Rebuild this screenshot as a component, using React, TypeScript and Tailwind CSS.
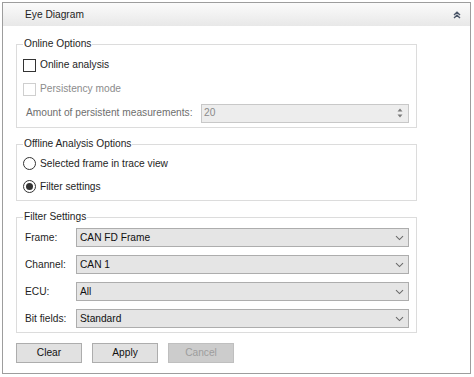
import type { ReactNode } from "react"

const font = { fontFamily: '"Liberation Sans", Arial, sans-serif' }

function Group({ title, children, className }: { title: string; children: ReactNode; className?: string }) {
  return (
    <fieldset className={`w-[401px] border border-[#dcdcdc] px-[6px] ${className ?? ""}`}>
      <legend className="px-[1px] leading-[14px] text-[#1e1e1e]">{title}</legend>
      {children}
    </fieldset>
  )
}

function Checkbox({ label, disabled }: { label: string; disabled?: boolean }) {
  return (
    <div className="flex h-[24px] items-center gap-[4px]">
      <span
        className={`h-[13px] w-[13px] border ${disabled ? "border-[#cfcfcf] bg-white" : "border-[#333333] bg-white"}`}
      />
      <span className={disabled ? "text-[#8c8c8c]" : "text-[#1e1e1e]"}>{label}</span>
    </div>
  )
}

function Radio({ label, checked }: { label: string; checked?: boolean }) {
  return (
    <div className="flex h-[23px] items-center gap-[4px]">
      <span className="flex h-[13px] w-[13px] items-center justify-center rounded-full border border-[#333333] bg-white">
        {checked && <span className="h-[7px] w-[7px] rounded-full bg-[#333333]" />}
      </span>
      <span className="text-[#1e1e1e]">{label}</span>
    </div>
  )
}

function Chevron() {
  return (
    <svg width="9" height="6" viewBox="0 0 9 6" className="text-[#6b6b6b]">
      <path d="M1 1.2 L4.5 4.6 L8 1.2" fill="none" stroke="currentColor" strokeWidth="1.1" />
    </svg>
  )
}

function Select({ label, value }: { label: string; value: string }) {
  return (
    <div className="flex h-[27px] items-center">
      <span className="w-[53px] pl-[2px] text-[#1e1e1e]">{label}</span>
      <div className="flex h-[19px] w-[333px] items-center justify-between border border-[#adadad] bg-[#e5e5e5] pl-[3px] pr-[4px]">
        <span className="text-[#111111]">{value}</span>
        <Chevron />
      </div>
    </div>
  )
}

function Button({ label, disabled }: { label: string; disabled?: boolean }) {
  return (
    <button
      disabled={disabled}
      className={`h-[20px] w-[66px] border text-center ${
        disabled ? "border-[#bfbfbf] bg-[#cccccc] text-[#9d9d9d]" : "border-[#adadad] bg-[#e1e1e1] text-[#111111]"
      }`}
    >
      {label}
    </button>
  )
}

export default function App() {
  return (
    <div className="h-[377px] w-[474px] bg-white pl-[2px] pt-[2px] text-[10.2px]" style={font}>
      <div className="h-[372px] w-[469px] border border-[#9d9d9d] bg-white">
        <div className="flex h-[23px] items-center justify-between bg-gradient-to-b from-[#fbfbfb] to-[#e8e8e8] pl-[22px] pr-[9px]">
          <span className="text-[#1e1e1e]">Eye Diagram</span>
          <svg width="8" height="8" viewBox="0 0 8 8" className="text-[#4a5568]">
            <path d="M1 4 L4 1.2 L7 4 M1 7 L4 4.2 L7 7" fill="none" stroke="currentColor" strokeWidth="1.4" />
          </svg>
        </div>

        <div className="flex flex-col pl-[13px]">
          <Group title="Online Options" className="mt-[11px] pb-[2px] pt-[2px]">
            <Checkbox label="Online analysis" />
            <Checkbox label="Persistency mode" disabled />
            <div className="flex h-[24px] items-center">
              <span className="w-[178px] pl-[3px] text-[#6e6e6e]">Amount of persistent measurements:</span>
              <div className="flex h-[19px] w-[208px] items-center justify-between border border-[#c8c8c8] bg-[#ededed] pl-[2px] pr-[5px]">
                <span className="text-[#8a8a8a]">20</span>
                <svg width="6" height="12" viewBox="0 0 6 12" className="text-[#7a7a7a]">
                  <path d="M0.5 4.5 L3 1.5 L5.5 4.5 Z M0.5 7.5 L3 10.5 L5.5 7.5 Z" fill="currentColor" />
                </svg>
              </div>
            </div>
          </Group>

          <Group title="Offline Analysis Options" className="mt-[9px] pb-[2px] pt-[1px]">
            <Radio label="Selected frame in trace view" />
            <Radio label="Filter settings" checked />
          </Group>

          <Group title="Filter Settings" className="mt-[9px]">
            <Select label="Frame:" value="CAN FD Frame" />
            <Select label="Channel:" value="CAN 1" />
            <Select label="ECU:" value="All" />
            <Select label="Bit fields:" value="Standard" />
          </Group>

          <div className="mt-[10px] flex gap-[10px]">
            <Button label="Clear" />
            <Button label="Apply" />
            <Button label="Cancel" disabled />
          </div>
        </div>
      </div>
    </div>
  )
}
